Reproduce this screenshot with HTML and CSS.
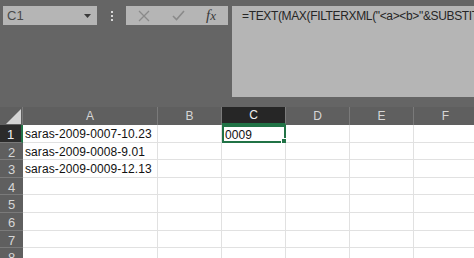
FILE: index.html
```html
<!DOCTYPE html>
<html lang="en">
<head>
    <meta charset="UTF-8">
    <title>Sheet</title>
    <link rel="stylesheet" href="styles.css">
</head>
<body>
<!-- Formula bar -->
<div class="topbar">
    <div class="namebox">
        <span>C1</span>
        <svg class="arrow" width="7" height="4" viewBox="0 0 7 4"><path d="M0 0h7L3.5 4z" fill="#3a3a3a"/></svg>
    </div>
    <div class="grip">
        <i></i><i></i><i></i>
    </div>
    <div class="buttons">
        <svg width="12" height="12" viewBox="0 0 12 12"><path d="M1 1l10 10M11 1L1 11" stroke="#8a8a8a" stroke-width="1.3"/></svg>
        <svg width="13" height="11" viewBox="0 0 13 11"><path d="M1 6l3.5 3.5L12 1" stroke="#8a8a8a" stroke-width="1.6" fill="none"/></svg>
        <span class="fx"><i>f</i><i>x</i></span>
    </div>
    <div class="formula">=TEXT(MAX(FILTERXML("&lt;a&gt;&lt;b&gt;"&amp;SUBSTITUTE(A1,"-","&lt;/b&gt;&lt;b&gt;")&amp;"&lt;/b&gt;&lt;/a&gt;","//b")),"0000")</div>
</div>

<!-- Sheet -->
<div class="sheet">
    <div class="corner"><span></span></div>
    <div class="col">A</div>
    <div class="col">B</div>
    <div class="col active">C</div>
    <div class="col">D</div>
    <div class="col">E</div>
    <div class="col">F</div>

    <div class="row active">1</div>
    <div class="cell">saras-2009-0007-10.23</div>
    <div class="cell"></div>
    <div class="cell selected">0009<span class="handle"></span></div>
    <div class="cell"></div>
    <div class="cell"></div>
    <div class="cell"></div>

    <div class="row">2</div>
    <div class="cell">saras-2009-0008-9.01</div>
    <div class="cell"></div>
    <div class="cell"></div>
    <div class="cell"></div>
    <div class="cell"></div>
    <div class="cell"></div>

    <div class="row">3</div>
    <div class="cell">saras-2009-0009-12.13</div>
    <div class="cell"></div>
    <div class="cell"></div>
    <div class="cell"></div>
    <div class="cell"></div>
    <div class="cell"></div>

    <div class="row">4</div>
    <div class="cell"></div><div class="cell"></div><div class="cell"></div><div class="cell"></div><div class="cell"></div><div class="cell"></div>
    <div class="row">5</div>
    <div class="cell"></div><div class="cell"></div><div class="cell"></div><div class="cell"></div><div class="cell"></div><div class="cell"></div>
    <div class="row">6</div>
    <div class="cell"></div><div class="cell"></div><div class="cell"></div><div class="cell"></div><div class="cell"></div><div class="cell"></div>
    <div class="row">7</div>
    <div class="cell"></div><div class="cell"></div><div class="cell"></div><div class="cell"></div><div class="cell"></div><div class="cell"></div>
    <div class="row">8</div>
    <div class="cell"></div><div class="cell"></div><div class="cell"></div><div class="cell"></div><div class="cell"></div><div class="cell"></div>
</div>
</body>
</html>
```

FILE: styles.css
```css
/* General Reset */
body, div {
    margin: 0;
    padding: 0;
    box-sizing: border-box;
}

body {
    width: 474px;
    height: 258px;
    overflow: hidden;
    background: #656565;
    font-family: 'Liberation Sans', Arial, sans-serif;
    font-size: 12px;
    color: #111;
}

/* Formula Bar */
.topbar {
    display: flex;
    align-items: flex-start;
    padding: 6px 0 0 3px;
    height: 107px;
}

.namebox {
    width: 94px;
    height: 19px;
    background: #b5b5b5;
    display: flex;
    align-items: center;
    justify-content: space-between;
    padding: 0 6px 0 4px;
    color: #4a4a4a;
    font-size: 13px;
}

.grip {
    width: 29px;
    height: 19px;
    display: flex;
    flex-direction: column;
    align-items: center;
    justify-content: center;
    gap: 2px;
}

.grip i {
    width: 2px;
    height: 2px;
    background: #d8d8d8;
}

.buttons {
    width: 102px;
    height: 19px;
    background: #b5b5b5;
    display: flex;
    align-items: center;
    justify-content: space-between;
    padding: 0 12px 0 12px;
}

.fx {
    font-family: 'Liberation Serif', serif;
    font-size: 15px;
    color: #3a3a3a;
    line-height: 1;
}

.fx i:last-child {
    font-size: 13px;
}

.formula {
    margin-left: 4px;
    flex: 1;
    height: 91px;
    background: #b5b5b5;
    padding: 3px 0 0 10px;
    white-space: nowrap;
    overflow: hidden;
    color: #262626;
    font-size: 12px;
    letter-spacing: -0.35px;
}

/* Sheet */
.sheet {
    display: grid;
    grid-template-columns: 23px 135px 64px 64px 64px 64px 64px;
    grid-template-rows: 18px repeat(8, 17.6px);
    width: 478px;
}

.corner {
    background: #5f5f5f;
    position: relative;
    border-right: 1px solid #7a7a7a;
}

.corner span {
    position: absolute;
    right: 1px;
    bottom: 1px;
    width: 0;
    height: 0;
    border-left: 15px solid transparent;
    border-bottom: 15px solid #d4d4d4;
}

.col {
    background: #5f5f5f;
    color: #d6d6d6;
    text-align: center;
    font-size: 12px;
    line-height: 18px;
    border-right: 1px solid #7a7a7a;
}

.col.active {
    background: #262626;
    color: #f0f0f0;
    border-bottom: 2px solid #217346;
    line-height: 17px;
}

.row {
    background: #5f5f5f;
    color: #d6d6d6;
    text-align: center;
    font-size: 13px;
    line-height: 19px;
    border-bottom: 1px solid #7a7a7a;
}

.row.active {
    background: #2b2b2b;
    color: #f0f0f0;
    border-right: 2px solid #217346;
}

.cell {
    background: #fff;
    border-right: 1px solid #e1e1e1;
    border-bottom: 1px solid #e1e1e1;
    padding-left: 2px;
    line-height: 19px;
    white-space: nowrap;
    position: relative;
    letter-spacing: 0.1px;
}

.cell.selected {
    border: 2px solid #217346;
    line-height: 17px;
    padding-left: 1px;
}

.handle {
    position: absolute;
    right: -4px;
    bottom: -4px;
    width: 5px;
    height: 5px;
    background: #217346;
    border: 1px solid #fff;
}
```
